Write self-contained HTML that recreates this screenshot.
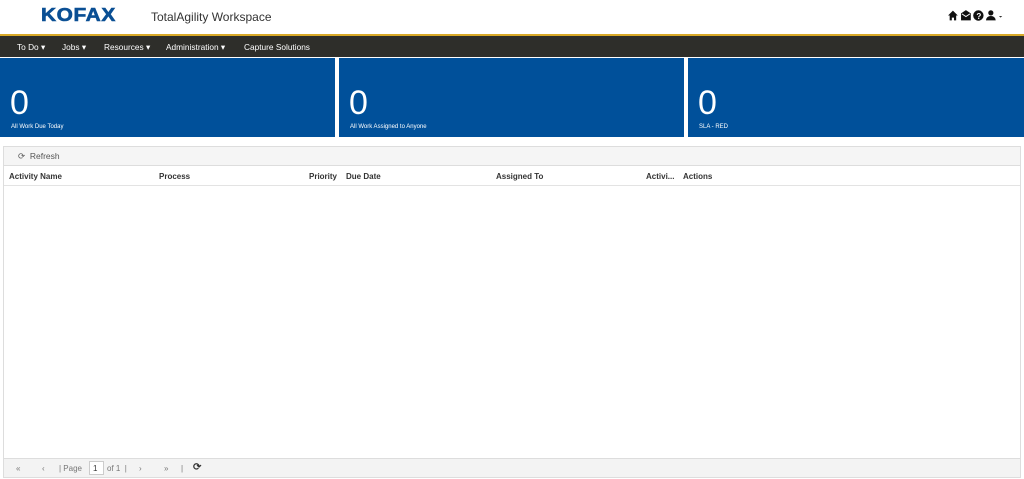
<!DOCTYPE html>
<html><head><style>
*{margin:0;padding:0;box-sizing:border-box}
body{width:1024px;height:479px;overflow:hidden;background:#fff;font-family:"Liberation Sans",sans-serif;position:relative}
.abs{position:absolute}
.hdr{top:0;left:0;width:1024px;height:34px;background:#fff}
.logo{left:41px;top:5px;font-weight:900;font-size:18px;color:#0a4f94;letter-spacing:0.5px;transform:scaleX(1.16);transform-origin:left;-webkit-text-stroke:0.6px #0a4f94}
.title{left:151px;top:10px;font-size:12px;color:#333}
.gold{top:34px;left:0;width:1024px;height:2px;background:#d8a928}
.nav{top:36px;left:0;width:1024px;height:21px;background:#2e2e2a;color:#fff;font-size:8.3px}
.nav span{position:absolute;top:6px}
.tile{top:58px;height:79px;background:#00509a;color:#fff}
.tile .n{position:absolute;left:10px;top:26px;font-size:34px}
.tile .l{position:absolute;left:11px;top:66px;font-size:6px}
.panel{left:3px;top:146px;width:1018px;height:332px;border:1px solid #ddd}
.tb{left:0;top:0;width:100%;height:19px;background:#f5f5f5;border-bottom:1px solid #ddd;font-size:8.5px;color:#555}
.th{left:0;top:19px;width:100%;height:20px;border-bottom:1px solid #e3e3e3;font-size:8px;font-weight:bold;color:#333}
.th span{position:absolute;top:6px}
.pg{left:0;bottom:0;width:100%;height:19px;background:#f3f3f3;border-top:1px solid #ddd;font-size:8px;color:#777}
.pg span{position:absolute;top:5px}
</style></head><body>
<div class="abs hdr"></div>
<div class="abs logo">KOFAX</div>
<div class="abs title">TotalAgility Workspace</div>
<svg class="abs" style="left:946px;top:9px" width="68" height="13" viewBox="0 0 60 12">
<path d="M0.5 6 L5 1.5 L9.5 6 H8 V10.5 H6 V8 H4 V10.5 H2 V6Z" fill="#111"/>
<path d="M12.5 4 L17 1 L21.5 4 V10.5 H12.5Z" fill="#111"/><path d="M13.3 4.5 L17 7 L20.7 4.5" stroke="#fff" stroke-width="0.9" fill="none"/>
<circle cx="28.5" cy="6" r="4.8" fill="#111"/><text x="26.6" y="9" font-size="7.5" font-weight="bold" fill="#fff" font-family="Liberation Sans">?</text>
<circle cx="40" cy="3.6" r="2.4" fill="#111"/><path d="M35.5 10.5 Q36 6.5 40 6.5 Q44 6.5 44.5 10.5Z" fill="#111"/>
<path d="M47.5 6.5 L50.5 6.5 L49 8Z" fill="#333"/>
</svg>
<div class="abs gold"></div>
<div class="abs nav">
<span style="left:17px">To Do ▾</span><span style="left:62px">Jobs ▾</span><span style="left:104px">Resources ▾</span><span style="left:166px">Administration ▾</span><span style="left:244px">Capture Solutions</span>
</div>
<div class="abs tile" style="left:0;width:335px"><div class="n">0</div><div class="l">All Work Due Today</div></div>
<div class="abs tile" style="left:339px;width:345px"><div class="n">0</div><div class="l">All Work Assigned to Anyone</div></div>
<div class="abs tile" style="left:688px;width:336px"><div class="n">0</div><div class="l">SLA - RED</div></div>
<div class="abs panel">
<div class="abs tb"><span style="position:absolute;left:14px;top:4px">⟳&nbsp; Refresh</span></div>
<div class="abs th"><span style="left:5px">Activity Name</span><span style="left:155px">Process</span><span style="left:305px">Priority</span><span style="left:342px">Due Date</span><span style="left:492px">Assigned To</span><span style="left:642px">Activi...</span><span style="left:679px">Actions</span></div>
<div class="abs pg"><span style="left:12px">«</span><span style="left:38px">‹</span><span style="left:55px">| Page</span><span style="left:85px;top:2px;width:15px;height:14px;background:#fff;border:1px solid #ccc;padding:2px 3px;color:#333">1</span><span style="left:103px">of 1 &nbsp;|</span><span style="left:135px">›</span><span style="left:160px">»</span><span style="left:177px">|</span><span style="left:189px;top:3px;font-weight:bold;color:#333;font-size:10px">⟳</span></div>
</div>
</body></html>
